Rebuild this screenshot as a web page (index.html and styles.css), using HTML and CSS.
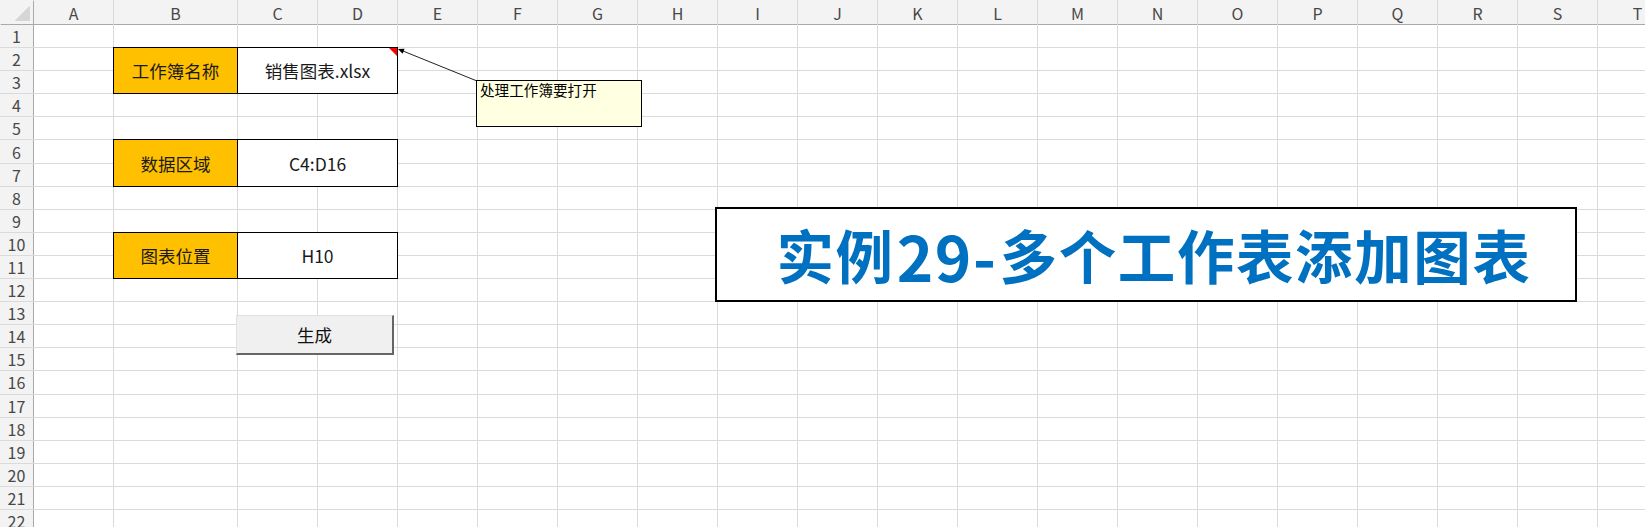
FILE: index.html
```html
<!DOCTYPE html>
<html lang="zh-CN">
<head>
<meta charset="utf-8">
<title>实例29-多个工作表添加图表</title>
<link rel="stylesheet" href="styles.css">
</head>
<body>
<div class="wrap">
  <div class="sheet">
    <div class="corner"></div><div class="ch">A</div><div class="ch">B</div><div class="ch">C</div><div class="ch">D</div><div class="ch">E</div><div class="ch">F</div><div class="ch">G</div><div class="ch">H</div><div class="ch">I</div><div class="ch">J</div><div class="ch">K</div><div class="ch">L</div><div class="ch">M</div><div class="ch">N</div><div class="ch">O</div><div class="ch">P</div><div class="ch">Q</div><div class="ch">R</div><div class="ch">S</div><div class="ch">T</div>

    <div class="rh">1</div><div></div><div></div><div></div><div></div><div></div><div></div><div></div><div></div><div></div><div></div><div></div><div></div><div></div><div></div><div></div><div></div><div></div><div></div><div></div><div></div>
    <div class="rh">2</div><div></div><div class="label">工作簿名称</div><div class="value">销售图表.xlsx<span class="tri"></span></div><div></div><div></div><div></div><div></div><div></div><div></div><div></div><div></div><div></div><div></div><div></div><div></div><div></div><div></div><div></div><div></div>
    <div class="rh">3</div><div></div><div></div><div></div><div></div><div></div><div></div><div></div><div></div><div></div><div></div><div></div><div></div><div></div><div></div><div></div><div></div><div></div>
    <div class="rh">4</div><div></div><div></div><div></div><div></div><div></div><div></div><div></div><div></div><div></div><div></div><div></div><div></div><div></div><div></div><div></div><div></div><div></div><div></div><div></div><div></div>
    <div class="rh">5</div><div></div><div></div><div></div><div></div><div></div><div></div><div></div><div></div><div></div><div></div><div></div><div></div><div></div><div></div><div></div><div></div><div></div><div></div><div></div><div></div>
    <div class="rh">6</div><div></div><div class="label">数据区域</div><div class="value">C4:D16</div><div></div><div></div><div></div><div></div><div></div><div></div><div></div><div></div><div></div><div></div><div></div><div></div><div></div><div></div><div></div><div></div>
    <div class="rh">7</div><div></div><div></div><div></div><div></div><div></div><div></div><div></div><div></div><div></div><div></div><div></div><div></div><div></div><div></div><div></div><div></div><div></div>
    <div class="rh">8</div><div></div><div></div><div></div><div></div><div></div><div></div><div></div><div></div><div></div><div></div><div></div><div></div><div></div><div></div><div></div><div></div><div></div><div></div><div></div><div></div>
    <div class="rh">9</div><div></div><div></div><div></div><div></div><div></div><div></div><div></div><div></div><div></div><div></div><div></div><div></div><div></div><div></div><div></div><div></div><div></div><div></div><div></div><div></div>
    <div class="rh">10</div><div></div><div class="label">图表位置</div><div class="value">H10</div><div></div><div></div><div></div><div></div><div></div><div></div><div></div><div></div><div></div><div></div><div></div><div></div><div></div><div></div><div></div><div></div>
    <div class="rh">11</div><div></div><div></div><div></div><div></div><div></div><div></div><div></div><div></div><div></div><div></div><div></div><div></div><div></div><div></div><div></div><div></div><div></div>
    <div class="rh">12</div><div></div><div></div><div></div><div></div><div></div><div></div><div></div><div></div><div></div><div></div><div></div><div></div><div></div><div></div><div></div><div></div><div></div><div></div><div></div><div></div>
    <div class="rh">13</div><div></div><div></div><div></div><div></div><div></div><div></div><div></div><div></div><div></div><div></div><div></div><div></div><div></div><div></div><div></div><div></div><div></div><div></div><div></div><div></div>
    <div class="rh">14</div><div></div><div></div><div></div><div></div><div></div><div></div><div></div><div></div><div></div><div></div><div></div><div></div><div></div><div></div><div></div><div></div><div></div><div></div><div></div><div></div>
    <div class="rh">15</div><div></div><div></div><div></div><div></div><div></div><div></div><div></div><div></div><div></div><div></div><div></div><div></div><div></div><div></div><div></div><div></div><div></div><div></div><div></div><div></div>
    <div class="rh">16</div><div></div><div></div><div></div><div></div><div></div><div></div><div></div><div></div><div></div><div></div><div></div><div></div><div></div><div></div><div></div><div></div><div></div><div></div><div></div><div></div>
    <div class="rh">17</div><div></div><div></div><div></div><div></div><div></div><div></div><div></div><div></div><div></div><div></div><div></div><div></div><div></div><div></div><div></div><div></div><div></div><div></div><div></div><div></div>
    <div class="rh">18</div><div></div><div></div><div></div><div></div><div></div><div></div><div></div><div></div><div></div><div></div><div></div><div></div><div></div><div></div><div></div><div></div><div></div><div></div><div></div><div></div>
    <div class="rh">19</div><div></div><div></div><div></div><div></div><div></div><div></div><div></div><div></div><div></div><div></div><div></div><div></div><div></div><div></div><div></div><div></div><div></div><div></div><div></div><div></div>
    <div class="rh">20</div><div></div><div></div><div></div><div></div><div></div><div></div><div></div><div></div><div></div><div></div><div></div><div></div><div></div><div></div><div></div><div></div><div></div><div></div><div></div><div></div>
    <div class="rh">21</div><div></div><div></div><div></div><div></div><div></div><div></div><div></div><div></div><div></div><div></div><div></div><div></div><div></div><div></div><div></div><div></div><div></div><div></div><div></div><div></div>
    <div class="rh">22</div><div></div><div></div><div></div><div></div><div></div><div></div><div></div><div></div><div></div><div></div><div></div><div></div><div></div><div></div><div></div><div></div><div></div><div></div><div></div><div></div>
  </div>

  <svg class="arrow" width="90" height="45" viewBox="0 0 90 45">
    <line x1="8" y1="6" x2="82" y2="36" stroke="#222" stroke-width="1"/>
    <polygon points="3,4 9.6,3.8 7.6,8.8" fill="#000"/>
  </svg>
  <div class="note">处理工作簿要打开</div>
  <div class="btn">生成</div>
  <div class="title">实例<span class="num">29-</span>多个工作表添加图表</div>
</div>
</body>
</html>
```

FILE: styles.css
```css
html, body {
  margin: 0;
  padding: 0;
  background: #fff;
}

body {
  width: 1645px;
  height: 527px;
  overflow: hidden;
  font-family: "Noto Sans CJK SC", "Noto Sans", sans-serif;
}

.wrap {
  position: relative;
  width: 1645px;
  height: 527px;
  overflow: hidden;
}

.sheet {
  display: grid;
  grid-template-columns: 33px 79px 123px repeat(18, 79px);
  grid-template-rows: 24px repeat(22, 22.1px);
  gap: 1px;
  background: #dadada;
  width: max-content;
}

.sheet > div {
  background: #fff;
}

.sheet > .corner {
  background: linear-gradient(135deg, transparent 50%, #d6d6d6 50%) right 3px bottom 3px / 15px 16px no-repeat, #f3f3f3;
  box-shadow: 1px 1px 0 #a9a9a9;
}

.sheet > .ch {
  background: #f3f3f3;
  box-shadow: 0 1px 0 #a9a9a9;
  color: #484848;
  font-size: 16px;
  line-height: 1;
  display: flex;
  align-items: center;
  justify-content: center;
  padding-top: 2px;
  box-sizing: border-box;
}

.sheet > .rh {
  background: #f3f3f3;
  box-shadow: 1px 0 0 #a9a9a9;
  color: #484848;
  font-size: 16px;
  line-height: 1;
  display: flex;
  align-items: center;
  justify-content: center;
}

.sheet > .label,
.sheet > .value {
  grid-row: span 2;
  position: relative;
  z-index: 1;
  outline: 1px solid #000;
  display: flex;
  align-items: center;
  justify-content: center;
  font-size: 17.5px;
  color: #1a1a1a;
}

.sheet > .label {
  background: #ffc000;
}

.sheet > .value {
  grid-column: span 2;
  background: #fff;
}

.tri {
  position: absolute;
  top: 0;
  right: 0;
  width: 0;
  height: 0;
  border-top: 8px solid #ff0000;
  border-left: 8px solid transparent;
}

.arrow {
  position: absolute;
  left: 395px;
  top: 45px;
  z-index: 2;
}

.note {
  position: absolute;
  left: 476px;
  top: 80px;
  width: 166px;
  height: 47px;
  box-sizing: border-box;
  border: 1px solid #000;
  background: #ffffe1;
  padding: 0 3px;
  font-size: 14.6px;
  line-height: 17px;
  color: #000;
  z-index: 2;
}

.btn {
  position: absolute;
  left: 236px;
  top: 315px;
  width: 158px;
  height: 40px;
  box-sizing: border-box;
  background: #f0f0f0;
  border-top: 1px solid #e0e0e0;
  border-left: 1px solid #e0e0e0;
  border-right: 2px solid #666;
  border-bottom: 2px solid #666;
  display: flex;
  align-items: center;
  justify-content: center;
  font-size: 17.5px;
  color: #111;
  z-index: 2;
}

.title {
  position: absolute;
  left: 715px;
  top: 207px;
  width: 862px;
  height: 95px;
  box-sizing: border-box;
  border: 2px solid #000;
  background: #fff;
  display: flex;
  align-items: center;
  justify-content: center;
  padding-left: 16px;
  color: #0070c0;
  font-weight: 700;
  font-size: 57.5px;
  letter-spacing: 1.6px;
  line-height: 1;
  z-index: 2;
}

.title .num {
  font-size: 62px;
  letter-spacing: 1.6px;
  padding: 0 2px;
}
```
